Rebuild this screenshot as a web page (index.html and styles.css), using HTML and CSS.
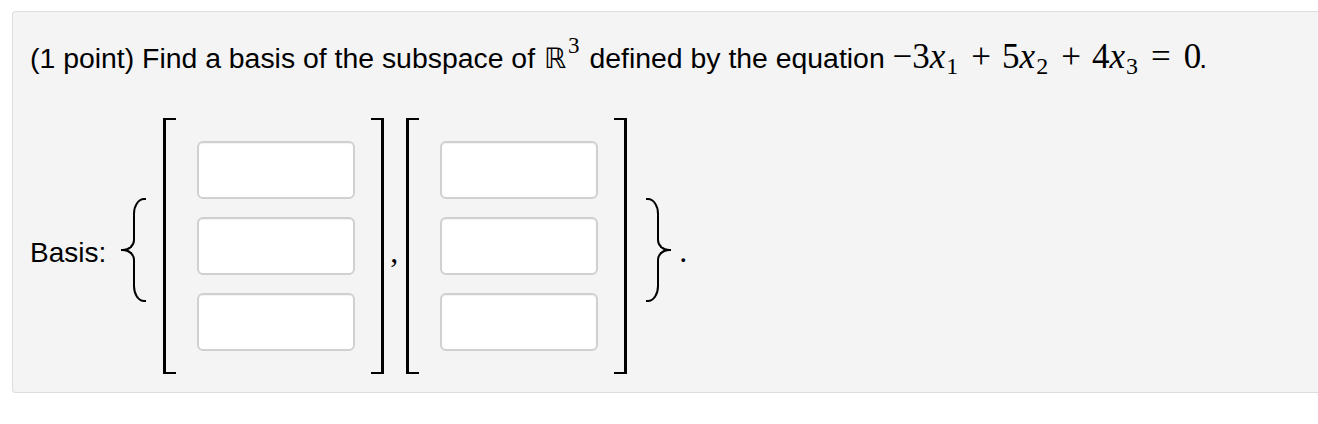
FILE: index.html
```html
<!DOCTYPE html>
<html lang="en">
<head>
<meta charset="utf-8">
<title>Basis problem</title>
<link rel="stylesheet" href="styles.css">
</head>
<body>
<div class="panel">
  <p class="question">(1 point) Find a basis of the subspace of <span class="m"><span class="bb">ℝ</span><span class="sup">3</span></span> defined by the equation <span class="m eq"><span class="neg">−</span>3<span class="mi">x</span><span class="sub">1</span><span class="bin">+</span>5<span class="mi">x</span><span class="sub">2</span><span class="bin">+</span>4<span class="mi">x</span><span class="sub">3</span><span class="rel">=</span>0</span><span class="end">.</span></p>
  <div class="answer">
    <span class="label">Basis:</span>
    <div class="brace brace-open">
      <div class="bq bq1"></div>
      <div class="bq bq2"></div>
      <div class="bq bq3"></div>
      <div class="bq bq4"></div>
    </div>
    <div class="matrix">
      <div class="bracket bracket-l"></div>
      <div class="cells">
        <input class="cell" type="text" aria-label="vector 1 entry 1">
        <input class="cell" type="text" aria-label="vector 1 entry 2">
        <input class="cell" type="text" aria-label="vector 1 entry 3">
      </div>
      <div class="bracket bracket-r"></div>
    </div>
    <span class="comma">,</span>
    <div class="matrix">
      <div class="bracket bracket-l"></div>
      <div class="cells">
        <input class="cell" type="text" aria-label="vector 2 entry 1">
        <input class="cell" type="text" aria-label="vector 2 entry 2">
        <input class="cell" type="text" aria-label="vector 2 entry 3">
      </div>
      <div class="bracket bracket-r"></div>
    </div>
    <div class="brace brace-close">
      <div class="bq bq1"></div>
      <div class="bq bq2"></div>
      <div class="bq bq3"></div>
      <div class="bq bq4"></div>
    </div>
    <span class="period">.</span>
  </div>
</div>
</body>
</html>
```

FILE: styles.css
```css
html, body {
  margin: 0;
  padding: 0;
  background: #ffffff;
  overflow: hidden;
}

body {
  font-family: "Liberation Sans", Arial, Helvetica, sans-serif;
  color: #000;
}

.panel {
  margin: 11px 0 0 12px;
  background: #f4f4f4;
  border: 1px solid #dedede;
  border-right: none;
  border-radius: 4px 0 0 4px;
  box-shadow: 0 1px 1px rgba(0, 0, 0, 0.04);
  padding: 29px 17px 18px;
}

.question {
  margin: 0;
  font-size: 28.4px;
  line-height: 34px;
  white-space: nowrap;
}

.m {
  font-family: "Liberation Serif", "Times New Roman", serif;
  font-size: 35px;
  line-height: 0;
}

.bb {
  font-family: "DejaVu Sans", "DejaVu Serif", sans-serif;
  font-size: 28px;
  margin-left: 1px;
}

.sup {
  font-size: 23px;
  vertical-align: 15px;
  margin-left: 2px;
  margin-right: 2px;
}

.mi {
  font-style: italic;
}

.sub {
  font-size: 24px;
  vertical-align: -6px;
  margin-left: 1px;
}

.bin {
  margin: 0 11px 0 13px;
}

.rel {
  margin: 0 13px 0 13px;
}

.end {
  margin-left: -2px;
}

.answer {
  margin-top: 43px;
  display: flex;
  align-items: center;
}

.label {
  font-size: 28px;
  line-height: 34px;
  margin-top: 13px;
  margin-right: 15px;
}

/* Curly braces built from four quarter pieces */
.brace {
  display: flex;
  flex-direction: column;
  width: 25px;
  height: 104px;
  margin-top: 8px;
}

.bq {
  box-sizing: border-box;
  border: 0 solid #000;
}

.brace-open {
  margin-right: 17px;
}

.brace-open .bq1 {
  margin-left: 12px;
  width: 13px;
  height: 41px;
  border-left-width: 2px;
  border-top-width: 2px;
  border-top-left-radius: 11px 16px;
}

.brace-open .bq2 {
  width: 14px;
  height: 12px;
  border-right-width: 2px;
  border-bottom-width: 2px;
  border-bottom-right-radius: 12px 11px;
}

.brace-open .bq3 {
  margin-top: -2px;
  width: 14px;
  height: 12px;
  border-right-width: 2px;
  border-top-width: 2px;
  border-top-right-radius: 12px 11px;
}

.brace-open .bq4 {
  margin-left: 12px;
  width: 13px;
  height: 41px;
  border-left-width: 2px;
  border-bottom-width: 2px;
  border-bottom-left-radius: 11px 16px;
}

.brace-close {
  margin-left: 19px;
}

.brace-close .bq1 {
  width: 13px;
  height: 41px;
  border-right-width: 2px;
  border-top-width: 2px;
  border-top-right-radius: 11px 16px;
}

.brace-close .bq2 {
  margin-left: 11px;
  width: 14px;
  height: 12px;
  border-left-width: 2px;
  border-bottom-width: 2px;
  border-bottom-left-radius: 12px 11px;
}

.brace-close .bq3 {
  margin-top: -2px;
  margin-left: 11px;
  width: 14px;
  height: 12px;
  border-left-width: 2px;
  border-top-width: 2px;
  border-top-left-radius: 12px 11px;
}

.brace-close .bq4 {
  width: 13px;
  height: 41px;
  border-right-width: 2px;
  border-bottom-width: 2px;
  border-bottom-right-radius: 11px 16px;
}

/* Matrices */
.matrix {
  display: flex;
  align-items: stretch;
}

.bracket {
  box-sizing: border-box;
  width: 13px;
  border: 0 solid #000;
  border-top-width: 2px;
  border-bottom-width: 2px;
}

.bracket-l {
  border-left-width: 3px;
}

.bracket-r {
  border-right-width: 3px;
}

.cells {
  display: flex;
  flex-direction: column;
  gap: 18px;
  padding: 23px 0;
  margin: 0 16px 0 21px;
}

.cell {
  box-sizing: border-box;
  width: 158px;
  height: 58px;
  margin: 0;
  padding: 0 8px;
  background: #ffffff;
  border: 2px solid #d0d0d0;
  border-radius: 6px;
  box-shadow: inset 0 1px 1px rgba(0, 0, 0, 0.05);
  font-size: 20px;
  outline: none;
}

.comma,
.period {
  font-family: "Liberation Serif", "Times New Roman", serif;
  font-size: 32px;
  line-height: 32px;
  margin-top: 10px;
}

.comma {
  margin-left: 6px;
  margin-right: 8px;
}

.period {
  margin-left: 8px;
}
```
